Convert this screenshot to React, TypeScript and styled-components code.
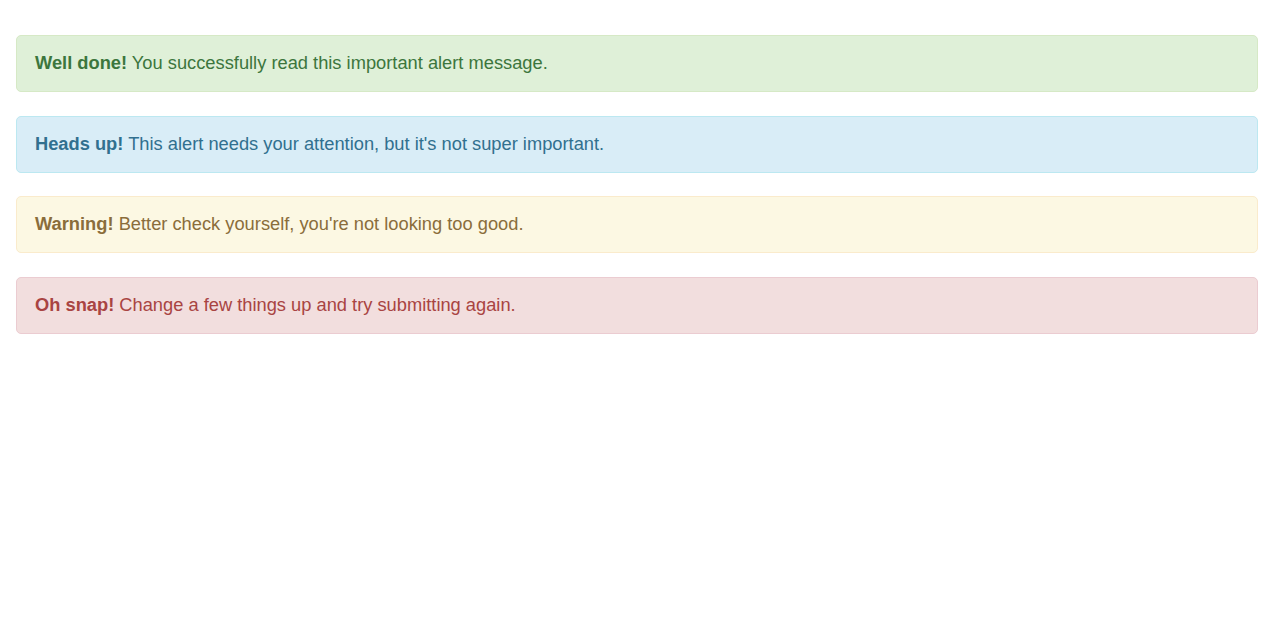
import styled, { createGlobalStyle } from 'styled-components'

const GlobalStyle = createGlobalStyle`
  html, body {
    margin: 0;
    background: #fff;
  }
  body {
    font-family: "Liberation Sans", Arial, sans-serif;
  }
`

type Kind = 'success' | 'info' | 'warning' | 'danger'

const palette: Record<Kind, { bg: string; border: string; text: string }> = {
  success: { bg: '#dff0d8', border: '#d6e9c6', text: '#3c763d' },
  info: { bg: '#d9edf7', border: '#bce8f1', text: '#31708f' },
  warning: { bg: '#fcf8e3', border: '#faebcc', text: '#8a6d3b' },
  danger: { bg: '#f2dede', border: '#ebccd1', text: '#a94442' },
}

const alerts: { kind: Kind; title: string; message: string }[] = [
  { kind: 'success', title: 'Well done!', message: 'You successfully read this important alert message.' },
  { kind: 'info', title: 'Heads up!', message: "This alert needs your attention, but it's not super important." },
  { kind: 'warning', title: 'Warning!', message: "Better check yourself, you're not looking too good." },
  { kind: 'danger', title: 'Oh snap!', message: 'Change a few things up and try submitting again.' },
]

const Page = styled.div`
  padding: 35px 22px 0 16px;
  display: flex;
  flex-direction: column;
  gap: 23.5px;
`

const Alert = styled.div<{ $kind: Kind }>`
  padding: 16px 18px 18px;
  border: 1px solid ${p => palette[p.$kind].border};
  border-radius: 5px;
  background: ${p => palette[p.$kind].bg};
  color: ${p => palette[p.$kind].text};
  font-size: 18.3px;
  line-height: 21px;

  strong {
    font-weight: 700;
  }
`

export default function App() {
  return (
    <>
      <GlobalStyle />
      <Page>
        {alerts.map(a => (
          <Alert key={a.kind} $kind={a.kind}>
            <strong>{a.title}</strong> {a.message}
          </Alert>
        ))}
      </Page>
    </>
  )
}
